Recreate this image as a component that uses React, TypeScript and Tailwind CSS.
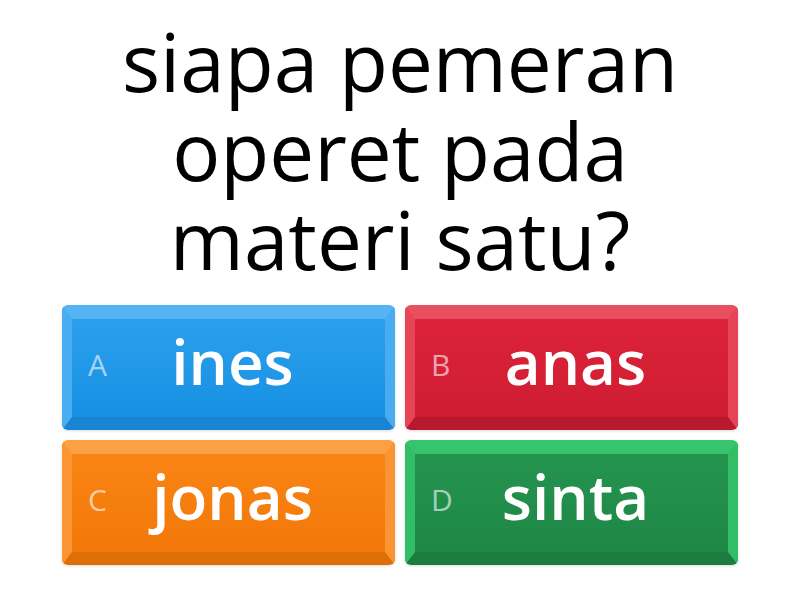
import React from "react";

type Opt = { l: string; t: string; c: string };

const opts: Opt[] = [
  { l: "A", t: "ines", c: "blue" },
  { l: "B", t: "anas", c: "red" },
  { l: "C", t: "jonas", c: "orange" },
  { l: "D", t: "sinta", c: "green" },
];

const styles: Record<string, string> = {
  blue: "bg-gradient-to-b from-[#2aa0ec] to-[#1790e3] border-t-[#55b4f1] border-x-[#47acf0] border-b-[#1a84d4]",
  red: "bg-gradient-to-b from-[#dc2339] to-[#cf1c32] border-t-[#e9505f] border-x-[#e64556] border-b-[#b81a2d]",
  orange: "bg-gradient-to-b from-[#f98414] to-[#f27808] border-t-[#fca046] border-x-[#fb9534] border-b-[#de6e06]",
  green: "bg-gradient-to-b from-[#24944f] to-[#1f8746] border-t-[#36c46c] border-x-[#31be66] border-b-[#1b7d40]",
};

export default function App() {
  return (
    <div
      className="w-[800px] h-[600px] bg-white flex flex-col items-center"
      style={{ fontFamily: '"Open Sans", "Noto Sans", sans-serif' }}
    >
      <div className="h-[305px] pt-[16px] text-center text-black text-[80px] leading-[89px] w-[760px]">
        <div>siapa pemeran</div>
        <div>operet pada</div>
        <div>materi satu?</div>
      </div>
      <div className="grid grid-cols-[333px_333px] gap-[10px]">
        {opts.map((o) => (
          <div
            key={o.l}
            className={`relative h-[125px] rounded-[6px] border-t-[14px] border-x-[10px] border-b-[13px] border-solid shadow-[0_1px_3px_rgba(0,0,0,0.15)] flex items-center justify-center ${styles[o.c]}`}
          >
            <span className="absolute left-[16px] top-1/2 -translate-y-1/2 -mt-[4px] text-[30px] text-white/60 font-normal">
              {o.l}
            </span>
            <span className="pl-[8px] text-white text-[62px] font-semibold leading-none -mt-[14px]">
              {o.t}
            </span>
          </div>
        ))}
      </div>
    </div>
  );
}
